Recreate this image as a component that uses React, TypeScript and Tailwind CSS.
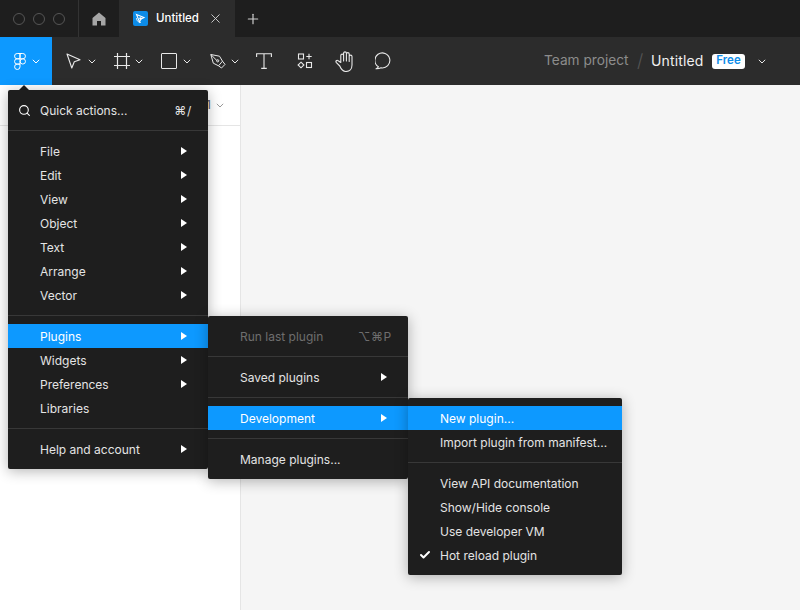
import { Search, X, Plus, Check } from "lucide-react";

type MenuEntry =
  | { sep: true }
  | { sep?: false; label: string; arrow?: boolean; active?: boolean; disabled?: boolean; shortcut?: string; checked?: boolean; search?: boolean };

const mainMenu: MenuEntry[] = [
  { label: "Quick actions...", shortcut: "⌘/", search: true },
  { sep: true },
  { label: "File", arrow: true },
  { label: "Edit", arrow: true },
  { label: "View", arrow: true },
  { label: "Object", arrow: true },
  { label: "Text", arrow: true },
  { label: "Arrange", arrow: true },
  { label: "Vector", arrow: true },
  { sep: true },
  { label: "Plugins", arrow: true, active: true },
  { label: "Widgets", arrow: true },
  { label: "Preferences", arrow: true },
  { label: "Libraries" },
  { sep: true },
  { label: "Help and account", arrow: true },
];

const pluginsMenu: MenuEntry[] = [
  { label: "Run last plugin", shortcut: "⌥⌘P", disabled: true },
  { sep: true },
  { label: "Saved plugins", arrow: true },
  { sep: true },
  { label: "Development", arrow: true, active: true },
  { sep: true },
  { label: "Manage plugins..." },
];

const devMenu: MenuEntry[] = [
  { label: "New plugin...", active: true },
  { label: "Import plugin from manifest..." },
  { sep: true },
  { label: "View API documentation" },
  { label: "Show/Hide console" },
  { label: "Use developer VM" },
  { label: "Hot reload plugin", checked: true },
];

function Chevron({ className = "" }: { className?: string }) {
  return (
    <svg width="8" height="5" viewBox="0 0 8 5" fill="none" className={className}>
      <path d="M.8.8 4 4l3.2-3.2" stroke="currentColor" strokeWidth="1" />
    </svg>
  );
}

function Menu({ items, className }: { items: MenuEntry[]; className: string }) {
  return (
    <div className={`absolute py-2 bg-[#1e1e1e] rounded-[2px] shadow-[0_2px_14px_rgba(0,0,0,0.3)] text-[12px] ${className}`}>
      {items.map((item, i) =>
        item.sep ? (
          <div key={i} className="h-px my-2 bg-[#383838]" />
        ) : (
          <div
            key={i}
            className={`relative h-6 pl-8 flex items-center justify-between ${item.active ? "bg-[#0d99ff] text-white" : item.disabled ? "text-[#6e6e6e]" : "text-[#e4e4e4]"}`}
          >
            {item.search && <Search size={13} strokeWidth={2} className="absolute left-[10px] text-white" />}
            {item.checked && <Check size={12} strokeWidth={4} className="absolute left-[11px] text-white" />}
            <span className="whitespace-nowrap pt-px">{item.label}</span>
            {item.arrow && (
              <svg width="6" height="8" viewBox="0 0 6 8" className="mr-[21px]">
                <path d="M0 0l6 4-6 4z" fill="white" />
              </svg>
            )}
            {item.shortcut && <span className="mr-4 pt-px text-[12px] tracking-[0.06em]">{item.shortcut}</span>}
          </div>
        )
      )}
    </div>
  );
}

function ToolIcon({ children, chevron, className }: { children: React.ReactNode; chevron?: boolean; className: string }) {
  return (
    <div className={`flex items-center shrink-0 text-[#e8e8e8] ${className}`}>
      {children}
      {chevron && <Chevron className="ml-[5px]" />}
    </div>
  );
}

export default function App() {
  return (
    <div className="relative w-[800px] h-[610px] overflow-hidden flex flex-col bg-[#f5f5f5] font-['Inter',sans-serif]">
      {/* tab bar */}
      <div className="h-[37px] flex bg-[#1e1e1e] shrink-0">
        <div className="w-[78px] flex items-center gap-2 pl-[13px]">
          <div className="w-3 h-3 rounded-full border border-[#555]" />
          <div className="w-3 h-3 rounded-full border border-[#555]" />
          <div className="w-3 h-3 rounded-full border border-[#555]" />
        </div>
        <div className="w-[41px] border-l border-[#333] flex items-center justify-center">
          <svg width="14" height="14" viewBox="0 0 14 14">
            <path d="M7 .5 13.500 6v7.500H9V9H5v4.500H.5V6z" fill="#a6a6a6" />
          </svg>
        </div>
        <div className="w-[116px] bg-[#2c2c2c] flex items-center pl-[14px]">
          <div className="w-[15px] h-[15px] rounded-[2px] bg-[#0d8ce8] flex items-center justify-center">
            <svg width="11" height="11" viewBox="0 0 11 11" fill="none">
              <path d="M1.500 1.500 9 4.500 6 6 4.500 9z" stroke="white" strokeWidth="1.100" />
              <circle cx="5.500" cy="5.500" r="1.200" fill="white" />
              <path d="M1.500 5c0 3 2 4.500 4.500 4.500" stroke="white" strokeWidth=".8" />
            </svg>
          </div>
          <span className="ml-2 w-[52px] text-[11.5px] font-medium text-white">Untitled</span>
          <X size={15} strokeWidth={1.500} className="text-[#d0d0d0]" />
        </div>
        <div className="flex items-center pl-[10px]">
          <Plus size={16} strokeWidth={1.750} className="text-[#d0d0d0]" />
        </div>
      </div>

      {/* toolbar */}
      <div className="h-[48px] flex items-center bg-[#2c2c2c] shrink-0">
        <div className="w-[52px] h-full bg-[#0d99ff] flex items-center pl-[14px] text-white shrink-0">
          <svg width="12" height="17" viewBox="0 0 12 17" fill="none" stroke="white" strokeWidth="1">
            <path d="M6 .5H3.200a2.600 2.600 0 0 0 0 5.300H6zM6 .5h2.800a2.600 2.600 0 0 1 0 5.300H6zM6 5.800H3.200a2.600 2.600 0 0 0 0 5.300H6z" />
            <circle cx="8.800" cy="8.400" r="2.650" />
            <path d="M3.200 11.100H6v2.700a2.700 2.700 0 1 1-2.800-2.700z" />
          </svg>
          <Chevron className="ml-[6px]" />
        </div>

        <ToolIcon chevron className="w-[62px] pl-[14px]">
          <svg width="15" height="16" viewBox="0 0 15 16" fill="none" stroke="currentColor" strokeWidth="1.100" className="mr-[2px]">
            <path d="M1 1 14 6.800 8.300 8.800 5.800 15z" strokeLinejoin="round" />
          </svg>
        </ToolIcon>
        <ToolIcon chevron className="w-[47px]">
          <svg width="16" height="16" viewBox="0 0 16 16" fill="none" stroke="currentColor" strokeWidth="1.200">
            <path d="M3.500 0v16M12.500 0v16M0 3.500h16M0 12.500h16" />
          </svg>
        </ToolIcon>
        <ToolIcon chevron className="w-[49px]">
          <div className="w-4 h-4 mr-px border border-[#e8e8e8] rounded-[1px]" />
        </ToolIcon>
        <ToolIcon chevron className="w-[46px]">
          <svg width="16" height="16" viewBox="0 0 16 16" fill="none" stroke="currentColor" strokeWidth="1">
            <path d="M.8 1.500 9.500 3.200l3 5-4 4.600-5.200-2.600zM1 1.700l6 6M12.500 8.200l2.500 3.200L11.500 15l-3-2.200" strokeLinejoin="round" />
            <circle cx="7.700" cy="7.800" r="1.100" />
          </svg>
        </ToolIcon>
        <ToolIcon className="w-[41px]">
          <svg width="16" height="16" viewBox="0 0 16 16" fill="none" stroke="currentColor" strokeWidth="1.100">
            <path d="M.6 4V.8h14.800V4M8 .8v14.600M5.200 15.400h5.600" />
          </svg>
        </ToolIcon>
        <ToolIcon className="w-[38px]">
          <svg width="16" height="16" viewBox="0 0 16 16" fill="none" stroke="currentColor" strokeWidth="1.100">
            <rect x="1.500" y="1" width="5" height="5" />
            <path d="M12 .8v5.400M9.300 3.500h5.400" />
            <path d="M4 9.200 6.900 12 4 14.800 1.100 12z" />
            <rect x="9.500" y="9.500" width="5" height="5" />
          </svg>
        </ToolIcon>
        <ToolIcon className="w-[40px]">
          <svg width="18" height="21" viewBox="0 0 18 21" fill="none" stroke="currentColor" strokeWidth="1.100">
            <path d="M4.800 15 1.400 11.600c-1.200-1.300.4-3 1.800-1.900L5.800 11.500V4.500c0-1.900 2.800-1.900 2.800 0V10V2.300c0-1.900 2.800-1.900 2.800 0V10V3c0-1.900 2.800-1.900 2.800 0V10.500V5.500c0-1.900 2.800-1.900 2.800 0V14c0 4-2.600 6.500-6.200 6.500-3 0-4.600-2-6-5.500z" strokeLinejoin="round" />
          </svg>
        </ToolIcon>
        <ToolIcon className="w-[169px]">
          <svg width="18" height="18" viewBox="0 0 18 18" fill="none" stroke="currentColor" strokeWidth="1.100">
            <path d="M1 16.800c1.200-.4 2-1 2.400-2A7.500 7.500 0 1 1 6 15.800c-1.500.9-3.200 1.100-5 1z" strokeLinejoin="round" />
          </svg>
        </ToolIcon>

        <span className="text-[13.700px] text-[#8c8c8c] w-[93px] shrink-0 pb-[2px]">Team project</span>
        <span className="text-[18px] text-[#555] w-[14px] shrink-0 font-light pb-[2px]">/</span>
        <span className="text-[14px] text-[#f0f0f0] tracking-[0.01em] w-[61px] shrink-0 pb-[2px]">Untitled</span>
        <span className="w-[33px] h-[15px] rounded-[3px] bg-white text-[#0d8ce8] text-[11.500px] font-semibold flex items-center justify-center shrink-0">Free</span>
        <Chevron className="ml-[13px] text-[#e8e8e8]" />
      </div>

      {/* page under the menus */}
      <div className="flex-1 flex min-h-0">
        <div className="w-[241px] bg-white border-r border-[#e5e5e5]">
          <div className="h-[41px] border-b border-[#e5e5e5] flex items-center justify-end pr-[16px] text-[12px] text-[#555] gap-[5px]">
            <span>1</span>
            <Chevron className="text-[#999]" />
          </div>
        </div>
        <div className="flex-1 bg-[#f5f5f5]" />
      </div>

      {/* open menus */}
      <div className="absolute left-[19px] top-[85px] w-0 h-0 border-x-[5px] border-x-transparent border-b-[5px] border-b-[#1e1e1e]" />
      <Menu items={mainMenu} className="left-[8px] top-[90px] w-[200px]" />
      <Menu items={pluginsMenu} className="left-[208px] top-[316px] w-[200px]" />
      <Menu items={devMenu} className="left-[408px] top-[398px] w-[214px]" />
    </div>
  );
}
